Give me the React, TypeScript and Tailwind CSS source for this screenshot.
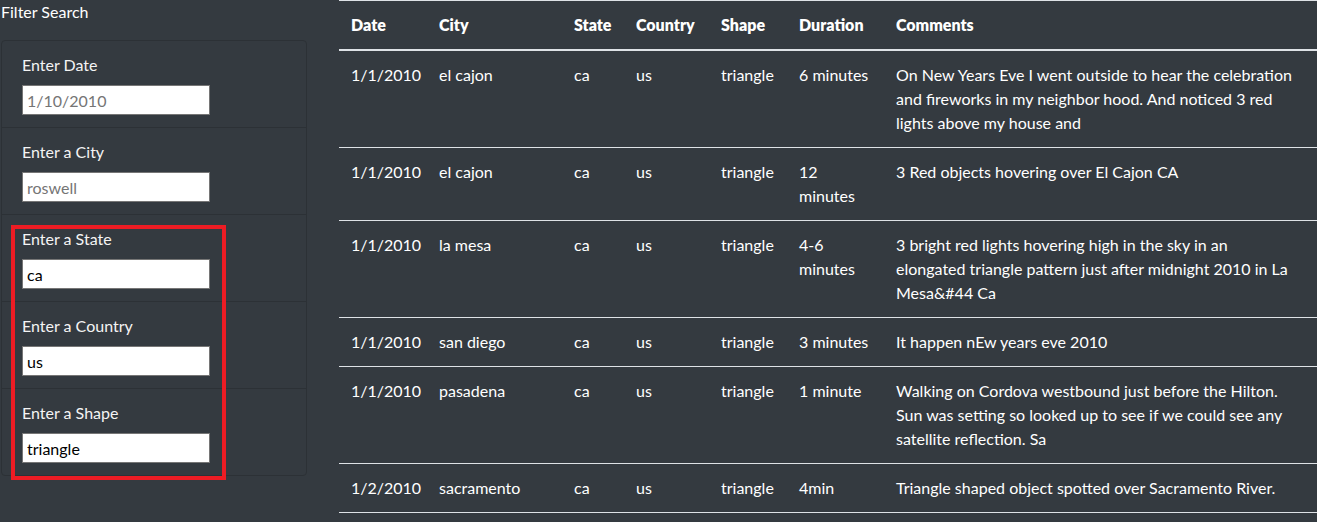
import React from 'react';

type Sighting = {
  date: string;
  city: string;
  state: string;
  country: string;
  shape: string;
  duration: string[];
  comments: string[];
};

// rows as shown, with the lines of each cell split where the reference wraps
const sightings: Sighting[] = [
  {
    date: '1/1/2010',
    city: 'el cajon',
    state: 'ca',
    country: 'us',
    shape: 'triangle',
    duration: ['6 minutes'],
    comments: [
      'On New Years Eve I went outside to hear the celebration',
      'and fireworks in my neighbor hood. And noticed 3 red',
      'lights above my house and',
    ],
  },
  {
    date: '1/1/2010',
    city: 'el cajon',
    state: 'ca',
    country: 'us',
    shape: 'triangle',
    duration: ['12', 'minutes'],
    comments: ['3 Red objects hovering over El Cajon CA'],
  },
  {
    date: '1/1/2010',
    city: 'la mesa',
    state: 'ca',
    country: 'us',
    shape: 'triangle',
    duration: ['4-6', 'minutes'],
    comments: [
      '3 bright red lights hovering high in the sky in an',
      'elongated triangle pattern just after midnight 2010 in La',
      'Mesa&#44 Ca',
    ],
  },
  {
    date: '1/1/2010',
    city: 'san diego',
    state: 'ca',
    country: 'us',
    shape: 'triangle',
    duration: ['3 minutes'],
    comments: ['It happen nEw years eve 2010'],
  },
  {
    date: '1/1/2010',
    city: 'pasadena',
    state: 'ca',
    country: 'us',
    shape: 'triangle',
    duration: ['1 minute'],
    comments: [
      'Walking on Cordova westbound just before the Hilton.',
      'Sun was setting so looked up to see if we could see any',
      'satellite reflection. Sa',
    ],
  },
  {
    date: '1/2/2010',
    city: 'sacramento',
    state: 'ca',
    country: 'us',
    shape: 'triangle',
    duration: ['4min'],
    comments: ['Triangle shaped object spotted over Sacramento River.'],
  },
];

const filters = [
  { label: 'Enter Date', placeholder: '1/10/2010', value: '' },
  { label: 'Enter a City', placeholder: 'roswell', value: '' },
  { label: 'Enter a State', placeholder: '', value: 'ca' },
  { label: 'Enter a Country', placeholder: '', value: 'us' },
  { label: 'Enter a Shape', placeholder: '', value: 'triangle' },
];

const Lines = ({ lines }: { lines: string[] }) => (
  <>
    {lines.map((l, i) => (
      <span key={i} className="block whitespace-nowrap">
        {l}
      </span>
    ))}
  </>
);

export default function App() {
  return (
    <div
      className="min-h-[522px] bg-[#343a40] text-white text-[16px] leading-6 flex"
      style={{ fontFamily: 'Lato, "Open Sans", sans-serif' }}
    >
      {/* sidebar */}
      <aside className="w-[339px] shrink-0 pl-px pr-[32px]">
        <h4 className="leading-6">Filter Search</h4>
        <div className="relative mt-4 w-[306px] rounded border border-[#2c3136]">
          <ul>
            {filters.map((f, i) => (
              <li
                key={f.label}
                className={`px-5 py-3 ${i > 0 ? 'border-t border-[#2c3136]' : ''}`}
              >
                <label className="block mb-2 text-[#f4f4f4]">{f.label}</label>
                <input
                  readOnly
                  value={f.value}
                  placeholder={f.placeholder}
                  className="block w-[188px] h-[30px] bg-white border border-[#767676] px-1 text-black placeholder:text-[#757575] outline-none"
                />
              </li>
            ))}
          </ul>
          {/* red highlight round the last three filters */}
          <div className="absolute left-[9px] top-[184px] w-[215px] h-[255px] border-4 border-[#ed1c24] pointer-events-none" />
        </div>
      </aside>

      {/* results */}
      <div className="flex-1">
        <table className="w-full table-fixed border-collapse border-t border-[#dee2e6]">
          <colgroup>
            <col className="w-[88px]" />
            <col className="w-[135px]" />
            <col className="w-[62px]" />
            <col className="w-[85px]" />
            <col className="w-[78px]" />
            <col className="w-[97px]" />
            <col />
          </colgroup>
          <thead>
            <tr className="border-b-2 border-[#dee2e6] text-left">
              {['Date', 'City', 'State', 'Country', 'Shape', 'Duration', 'Comments'].map((h) => (
                <th key={h} className="px-3 py-3 font-extrabold">
                  {h}
                </th>
              ))}
            </tr>
          </thead>
          <tbody>
            {sightings.map((s, i) => (
              <tr key={i} className="border-b border-[#dee2e6] align-top">
                <td className="p-3">{s.date}</td>
                <td className="p-3">{s.city}</td>
                <td className="p-3">{s.state}</td>
                <td className="p-3">{s.country}</td>
                <td className="p-3">{s.shape}</td>
                <td className="p-3">
                  <Lines lines={s.duration} />
                </td>
                <td className="p-3">
                  <Lines lines={s.comments} />
                </td>
              </tr>
            ))}
          </tbody>
        </table>
      </div>
    </div>
  );
}
